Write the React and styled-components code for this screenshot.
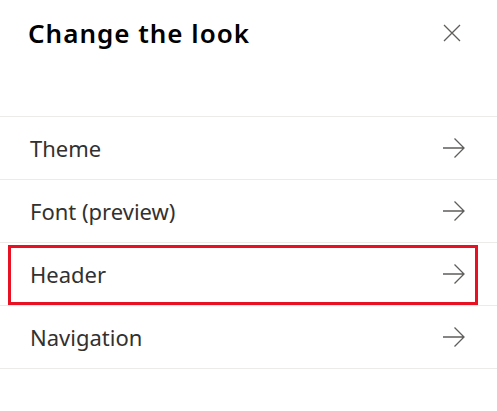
import styled, { createGlobalStyle } from 'styled-components';

const GlobalStyle = createGlobalStyle`
  body {
    margin: 0;
    background: #ffffff;
    font-family: "Noto Sans", "Open Sans", sans-serif;
  }
`;

const items = [
  { label: 'Theme' },
  { label: 'Font (preview)' },
  { label: 'Header', highlighted: true },
  { label: 'Navigation' },
];

const CloseIcon = () => (
  <svg width="18" height="18" viewBox="0 0 18 18" fill="none">
    <path d="M1 1 L17 17 M17 1 L1 17" stroke="#605e5c" strokeWidth="1.3" />
  </svg>
);

const ArrowIcon = () => (
  <svg width="24" height="22" viewBox="0 0 24 22" fill="none">
    <path
      d="M1 11 H22 M12.5 1.5 L22 11 L12.5 20.5"
      stroke="#605e5c"
      strokeWidth="1.3"
      strokeLinejoin="miter"
    />
  </svg>
);

const App = () => {
  return (
    <>
      <GlobalStyle />
      <StyledPanel>
        <StyledHeader>
          <StyledTitle>Change the look</StyledTitle>
          <StyledCloseButton aria-label="Close">
            <CloseIcon />
          </StyledCloseButton>
        </StyledHeader>
        <StyledList>
          {items.map((item) => (
            <StyledRow key={item.label}>
              <StyledLabel>{item.label}</StyledLabel>
              <ArrowIcon />
              {item.highlighted && <StyledHighlight />}
            </StyledRow>
          ))}
        </StyledList>
      </StyledPanel>
    </>
  );
};

const StyledPanel = styled.div`
  width: 497px;
  height: 411px;
  display: flex;
  flex-direction: column;
  background: #ffffff;
`;

const StyledHeader = styled.div`
  height: 116px;
  display: flex;
  align-items: flex-start;
  justify-content: space-between;
  padding: 15px 36px 0 28px;
  box-sizing: border-box;
`;

const StyledTitle = styled.h1`
  margin: 0;
  font-size: 26px;
  font-weight: 600;
  letter-spacing: 1px;
  line-height: 36px;
  color: #000000;
`;

const StyledCloseButton = styled.button`
  display: flex;
  align-items: center;
  justify-content: center;
  margin-top: 9px;
  padding: 0;
  border: none;
  background: transparent;
  cursor: pointer;
`;

const StyledList = styled.div`
  display: flex;
  flex-direction: column;
  border-top: 1px solid #edebe9;
`;

const StyledRow = styled.div`
  position: relative;
  height: 62px;
  display: flex;
  align-items: center;
  justify-content: space-between;
  padding: 0 31px 0 30px;
  border-bottom: 1px solid #edebe9;
  cursor: pointer;
`;

const StyledLabel = styled.span`
  font-size: 22px;
  color: #323130;
`;

const StyledHighlight = styled.div`
  position: absolute;
  left: 8px;
  right: 19px;
  top: 2px;
  bottom: 0;
  border: 3px solid #e81123;
  pointer-events: none;
`;

export default App;
